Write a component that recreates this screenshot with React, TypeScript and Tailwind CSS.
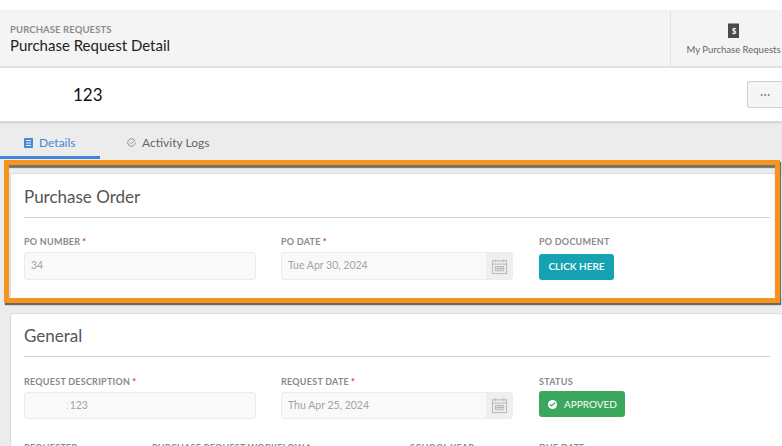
import type { ReactNode } from "react";
import { Check, MoreHorizontal } from "lucide-react";

function CalendarIcon() {
  return (
    <svg viewBox="0 0 18 18" className="h-[17px] w-[17px]" fill="none" stroke="#b5b5b5" strokeWidth="1">
      <rect x="1.5" y="3" width="15" height="13.5" />
      <path d="M1.5 6.5h15M4.5 1.5v3M13.5 1.5v3" />
      <path d="M4.5 9h9v4.5h-9zM7.5 9v4.5M10.5 9v4.5M4.5 11.2h9" />
    </svg>
  );
}

function ReceiptIcon() {
  return (
    <svg viewBox="0 0 12 15" className="h-[15px] w-[12px]">
      <path d="M0 1l1-1 1 1 1-1 1 1 1-1 1 1 1-1 1 1 1-1 1 1 1-1v15H0z" fill="#4a4a4a" />
      <text x="6" y="10.5" textAnchor="middle" fontSize="8" fontWeight="700" fill="#fff">$</text>
    </svg>
  );
}

function DetailsIcon() {
  return (
    <svg viewBox="0 0 9 10" className="h-[10px] w-[9px]">
      <rect width="9" height="10" rx="1" fill="#4a86d4" />
      <path d="M2 2.5h5M2 5h5M2 7.5h5" stroke="#fff" strokeWidth="0.9" />
    </svg>
  );
}

function ActivityIcon() {
  return (
    <svg viewBox="0 0 10 10" className="h-[9px] w-[9px]" fill="none" stroke="#8a8a8a" strokeWidth="1">
      <path d="M8.8 3.2A4.2 4.2 0 1 0 9.2 5" />
      <path d="M3.5 5l1.3 1.2L9 2" />
    </svg>
  );
}

function Label({ text, required }: { text: string; required?: boolean }) {
  return (
    <div className="mb-[5px] text-[9px] leading-[11px] font-bold tracking-[0.25px] text-[#8a8a8a]">
      {text}
      {required && <span className="ml-[2px] text-[#d9363e]">*</span>}
    </div>
  );
}

function TextField({ label, value, prefix, boxClass = "h-[28px]" }: { label: string; value: string; prefix?: boolean; boxClass?: string }) {
  return (
    <div>
      <Label text={label} required />
      <div className={`flex items-center rounded-[3px] border border-[#ececec] bg-[#f9f9f9] px-[6px] text-[10.5px] text-[#a3a3a3] ${boxClass}`}>
        {prefix && <span className="ml-[35px] mr-[1px] text-[#d8d8d8]">:</span>}
        <span>{value}</span>
      </div>
    </div>
  );
}

function DateField({ label, value, boxClass = "h-[28px]" }: { label: string; value: string; boxClass?: string }) {
  return (
    <div>
      <Label text={label} required />
      <div className={`flex items-center rounded-[3px] border border-[#ececec] bg-[#f9f9f9] text-[10.5px] text-[#a3a3a3] ${boxClass}`}>
        <span className="flex-1 px-[6px]">{value}</span>
        <span className="flex h-full w-[26px] items-center justify-center rounded-r-[3px] bg-[#efefef]">
          <CalendarIcon />
        </span>
      </div>
    </div>
  );
}

function Card({ title, children, className, titleClass }: { title: string; children: ReactNode; className: string; titleClass: string }) {
  return (
    <section className={`ml-[10px] rounded-t-[3px] border border-r-0 border-[#dcdcdc] bg-white pl-[13px] pr-[12px] ${className}`}>
      <h2 className={`flex items-center border-b border-[#d2d2d2] text-[17px] text-[#555] ${titleClass}`}>{title}</h2>
      {children}
    </section>
  );
}

export default function App() {
  return (
    <div className="relative h-[446px] w-[782px] overflow-hidden bg-[#ececec] font-['Lato','Noto_Sans',sans-serif]">
      <div className="h-[10px] bg-white" />

      <header className="flex h-[58px] border-b-2 border-[#e3e3e3] bg-[#f4f4f4]">
        <div className="flex-1 pl-[10px] pt-[14px]">
          <div className="text-[9.5px] leading-[11px] font-bold tracking-[0.1px] text-[#8c8c8c]">PURCHASE REQUESTS</div>
          <h1 className="text-[15px] leading-[20px] text-[#222]">Purchase Request Detail</h1>
        </div>
        <div className="flex w-[112px] flex-col items-center border-l border-[#e3e3e3] pl-[14px] pt-[13px]">
          <ReceiptIcon />
          <div className="mt-[6px] text-[9.5px] leading-[12px] whitespace-nowrap text-[#666]">My Purchase Requests</div>
        </div>
      </header>

      <div className="flex h-[54px] items-center justify-between border-b border-[#d6d6d6] bg-white shadow-[0_1px_2px_rgba(0,0,0,0.12)]">
        <div className="pl-[73px] text-[17px] text-[#111]">123</div>
        <button className="flex h-[27px] w-[35px] items-center justify-center rounded-l-[3px] border border-r-0 border-[#cfcfcf] bg-[#f5f5f5] text-[#777]">
          <MoreHorizontal size={12} />
        </button>
      </div>

      <nav className="flex h-[37px] text-[12px]">
        <div className="flex w-[100px] items-center gap-[6px] border-b-[3px] border-[#3f87d9] pl-[24px] pt-[8px] text-[#4a86d4]">
          <DetailsIcon />
          Details
        </div>
        <div className="flex items-center gap-[6px] pl-[27px] pt-[4px] text-[#666]">
          <ActivityIcon />
          Activity Logs
        </div>
      </nav>

      <Card title="Purchase Order" className="mt-[14px] h-[126px]" titleClass="h-[44px] pt-[2px]">
        <div className="grid grid-cols-3 gap-x-[25px] pt-[18px]">
          <TextField label="PO NUMBER" value="34" />
          <DateField label="PO DATE" value="Tue Apr 30, 2024" />
          <div className="pl-px">
            <Label text="PO DOCUMENT" />
            <button className="h-[26px] w-[75px] rounded-[3px] bg-[#15a3b3] text-[10px] font-semibold text-white">CLICK HERE</button>
          </div>
        </div>
      </Card>

      <Card title="General" className="mt-[14px] h-[200px]" titleClass="h-[43px] pt-[2px]">
        <div className="grid grid-cols-3 gap-x-[25px] pt-[19px]">
          <TextField label="REQUEST DESCRIPTION" value="123" prefix boxClass="h-[27px]" />
          <DateField label="REQUEST DATE" value="Thu Apr 25, 2024" boxClass="h-[27px]" />
          <div className="pl-px">
            <Label text="STATUS" />
            <div className="-mt-px flex h-[26px] w-[86px] items-center gap-[7px] rounded-[3px] bg-[#3aa75d] pl-[9px] text-[10px] text-white">
              <span className="flex h-[9px] w-[9px] items-center justify-center rounded-full bg-white text-[#3aa75d]">
                <Check size={7} strokeWidth={4} />
              </span>
              APPROVED
            </div>
          </div>
        </div>
        <div className="mt-[23px] flex text-[9px] leading-[12px] font-bold tracking-[0.25px] text-[#8a8a8a]">
          <span className="w-[128px]">REQUESTER</span>
          <span className="w-[258px]">PURCHASE REQUEST WORKFLOW<span className="ml-[2px] text-[#d9363e]">*</span></span>
          <span className="w-[129px]">SCHOOL YEAR</span>
          <span>DUE DATE</span>
        </div>
      </Card>

      {/* orange highlight drawn over the screenshot */}
      <div className="pointer-events-none absolute top-[160px] left-[4px] h-[143px] w-[776px] border-[5px] border-[#f7941d] shadow-[1px_2px_1px_rgba(60,60,60,0.75),inset_0_3px_1px_rgba(60,60,60,0.7)]" />
    </div>
  );
}
